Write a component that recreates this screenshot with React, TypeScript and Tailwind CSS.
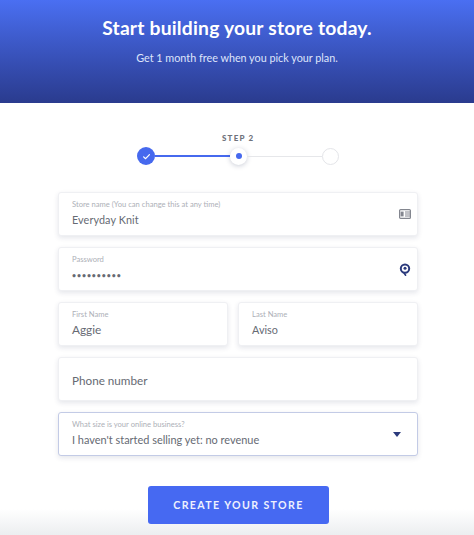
import React from "react";

const font = { fontFamily: '"Lato", "Noto Sans", sans-serif' };

function Field({ label, value, className = "", valueClass = "", children, focus = false }: { label?: string; value: string; className?: string; valueClass?: string; children?: React.ReactNode; focus?: boolean }) {
  return (
    <div className={`relative flex h-[44px] flex-col justify-center rounded-[3px] border bg-white pl-[13px] pr-[13px] shadow-[0_2px_5px_rgba(40,50,90,0.12)] ${focus ? "border-[#c3cbe6]" : "border-[#eff0f3]"} ${className}`}>
      {label && <div className="text-[7.6px] leading-[11px] text-[#adb0b7]">{label}</div>}
      <div className={`leading-[18px] text-[#666a73] ${label ? "mt-[1px]" : ""} ${valueClass}`}>{value}</div>
      {children}
    </div>
  );
}

export default function App() {
  return (
    <div style={font} className="relative flex h-[535px] w-[474px] flex-col overflow-hidden bg-white">
      <header className="flex h-[103px] w-full flex-col items-center bg-gradient-to-b from-[#4a6ff2] to-[#2a3b8e] pt-[15px] text-white">
        <h1 className="text-[19.3px] font-bold leading-[26px] tracking-[0.2px]">Start building your store today.</h1>
        <p className="mt-[9px] text-[10.8px] leading-[16px] text-[#dfe5fb]">Get 1 month free when you pick your plan.</p>
      </header>

      <div className="mt-[29px] ml-[222px] text-[8px] font-black leading-[12px] tracking-[1.2px] text-[#6f727c]">STEP 2</div>

      <div className="mt-[3px] ml-[137px] flex w-[202px] items-center">
        <div className="flex h-[18px] w-[18px] shrink-0 items-center justify-center rounded-full bg-[#4669ee]">
          <svg viewBox="0 0 10 10" className="h-[9px] w-[9px]" fill="none" stroke="#fff" strokeWidth="1.4" strokeLinecap="round" strokeLinejoin="round"><path d="M1.8 5.4 4 7.4 8.3 2.9" /></svg>
        </div>
        <div className="h-[2px] flex-1 bg-[#4669ee]" />
        <div className="flex h-[17px] w-[17px] shrink-0 items-center justify-center rounded-full bg-white shadow-[0_1px_5px_rgba(40,50,90,0.25)]">
          <div className="h-[6px] w-[6px] rounded-full bg-[#4669ee]" />
        </div>
        <div className="h-[1px] flex-1 bg-[#e6e7ea]" />
        <div className="h-[17px] w-[17px] shrink-0 rounded-full border border-[#e4e5e9] bg-white" />
      </div>

      <form className="mt-[27px] ml-[58px] flex w-[360px] flex-col gap-[11px]">
        <Field label="Store name (You can change this at any time)" value="Everyday Knit" valueClass="text-[10.8px] tracking-[0.1px]">
          <svg viewBox="0 0 12 10" className="absolute right-[6px] top-[16px] h-[10px] w-[12px]" fill="none" stroke="#83868f" strokeWidth="1.2"><rect x="0.6" y="0.6" width="10.8" height="8.8" rx="1" /><rect x="1.6" y="2.6" width="3" height="4.8" fill="#83868f" stroke="none" /><path d="M6 3h5M6 5h5M6 7h5" /></svg>
        </Field>
        <Field label="Password" value="••••••••••" valueClass="text-[7px] tracking-[0.9px] font-bold text-[#4d5160]">
          <svg viewBox="0 0 12 13" className="absolute right-[6px] top-[15px] h-[13px] w-[12px]" fill="none"><circle cx="6" cy="5.6" r="4.2" stroke="#2b3a7c" strokeWidth="2" /><circle cx="6" cy="5.2" r="1.5" fill="#2b3a7c" /><path d="M5.2 10.2 6.6 12.2" stroke="#2b3a7c" strokeWidth="1.6" strokeLinecap="round" /></svg>
        </Field>
        <div className="flex gap-[10px]">
          <Field className="w-[170px]" label="First Name" value="Aggie" valueClass="text-[11.8px]" />
          <Field className="flex-1" label="Last Name" value="Aviso" valueClass="text-[10.8px]" />
        </div>
        <Field value="Phone number" valueClass="mt-[2px] text-[11.7px]" />
        <Field focus label="What size is your online business?" value="I haven't started selling yet: no revenue" valueClass="text-[10.95px]">
          <svg viewBox="0 0 8 5" className="absolute right-[16px] top-[19px] h-[5px] w-[8px]"><path d="M0 0h8L4 5z" fill="#2b3a7c" /></svg>
        </Field>
      </form>

      <div className="pointer-events-none absolute bottom-0 left-0 h-[26px] w-full bg-gradient-to-b from-white to-[#eceef0]" />
      <button className="relative mt-[30px] ml-[148px] flex h-[38px] w-[181px] items-center justify-center rounded-[3px] bg-[#4669f2] pt-[2px] text-[10.6px] font-bold tracking-[1.4px] text-[#eef1fe]">CREATE YOUR STORE</button>
    </div>
  );
}
